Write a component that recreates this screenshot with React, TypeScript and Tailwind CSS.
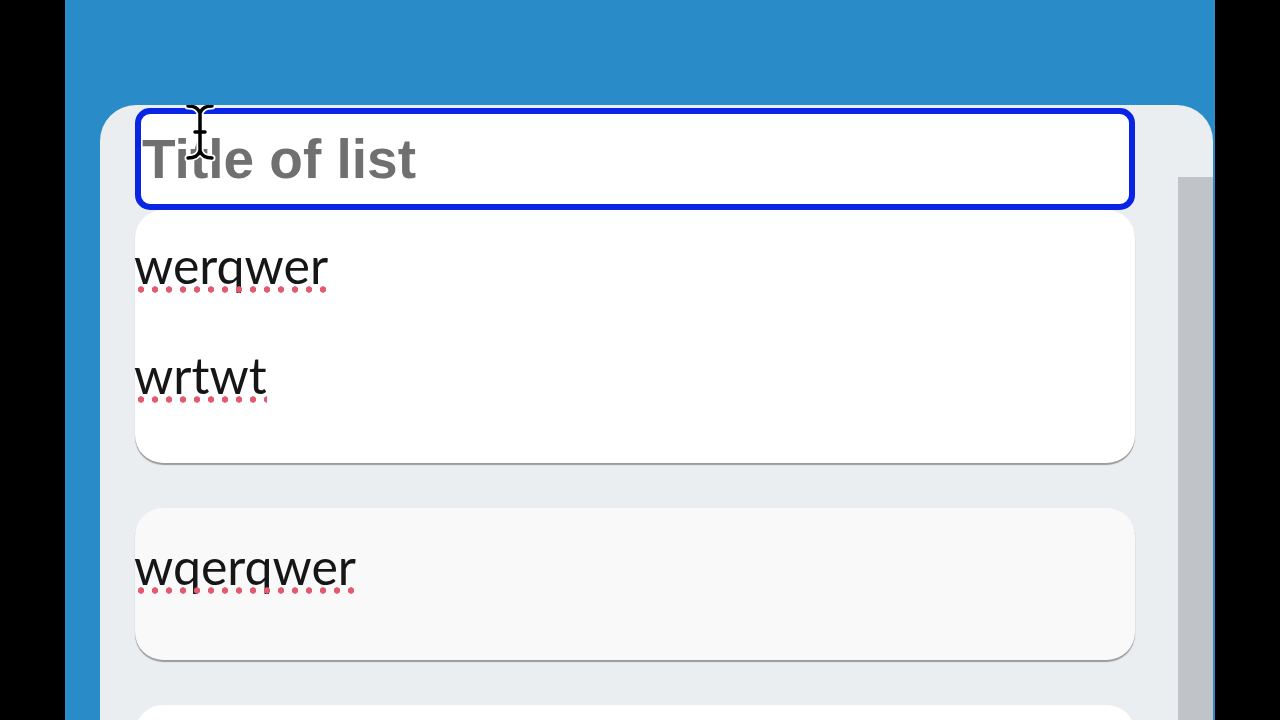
import type { ReactNode } from "react";

function Misspelled({ children }: { children: ReactNode }) {
  return (
    <span className="relative inline-block leading-[60px]">
      {children}
      <span className="absolute left-0 right-0 top-[51px] h-[7px] bg-[radial-gradient(circle,#e25a6e_2.9px,transparent_3.5px)] bg-[length:14px_7px] bg-repeat-x" />
    </span>
  );
}

function Card({ lines, dim, h }: { lines: string[]; dim?: boolean; h: string }) {
  return (
    <div
      className={
        "w-full shrink-0 rounded-[28px] shadow-[0_2px_1px_rgba(0,0,0,0.35)] font-['Lato',sans-serif] text-[50px] text-[#161616] " +
        h +
        (dim ? " bg-[#f9f9fa] pt-[28px] leading-[60px]" : " bg-white leading-[110px]")
      }
    >
      {lines.map((line) => (
        <div key={line} className="-ml-px">
          <Misspelled>{line}</Misspelled>
        </div>
      ))}
    </div>
  );
}

export default function App() {
  return (
    <div className="flex h-[720px] w-[1280px] overflow-hidden bg-black">
      <div className="w-[65px] shrink-0 bg-black" />

      <div className="flex w-[1150px] shrink-0 flex-col bg-[#298bc7] pl-[35px] pr-[2px] pt-[105px]">
        <div className="flex flex-1 overflow-hidden rounded-t-[36px] bg-[#ebeef0]">
          <div className="relative flex w-[1078px] shrink-0 flex-col pl-[35px] pr-[43px] pt-[3px]">
            <div className="relative z-10 h-[102px] shrink-0 rounded-[15px] border-[6px] border-[#0a24e6] bg-white">
              <input
                placeholder="Title of list"
                className="h-full w-full rounded-[9px] bg-transparent pl-[1px] font-['Liberation_Sans',Arial,sans-serif] text-[55px] font-bold text-[#222] outline-none placeholder:text-[#707070]"
              />
              <svg
                className="pointer-events-none absolute left-[43px] top-[-12px]"
                width="32"
                height="60"
                viewBox="0 0 32 60"
              >
                <path
                  d="M4 4 C11 4 14 6 16 11 C18 6 21 4 28 4 M16 11 V49 M4 56 C11 56 14 54 16 49 C18 54 21 56 28 56 M11 30 H21"
                  fill="none"
                  stroke="#fff"
                  strokeWidth="7"
                  strokeLinecap="round"
                />
                <path
                  d="M4 4 C11 4 14 6 16 11 C18 6 21 4 28 4 M16 11 V49 M4 56 C11 56 14 54 16 49 C18 54 21 56 28 56 M11 30 H21"
                  fill="none"
                  stroke="#000"
                  strokeWidth="3.5"
                  strokeLinecap="round"
                />
              </svg>
            </div>

            <div className="shrink-0">
              <Card lines={["werqwer", "wrtwt"]} h="h-[253px]" />
            </div>
            <div className="mt-[45px] shrink-0">
              <Card lines={["wqerqwer"]} dim h="h-[152px]" />
            </div>
            <div className="mt-[45px] shrink-0">
              <Card lines={[]} h="h-[152px]" />
            </div>
          </div>

          <div className="flex flex-1 flex-col pt-[72px]">
            <div className="flex-1 bg-[#c0c4c8]" />
          </div>
        </div>
      </div>

      <div className="flex-1 bg-black" />
    </div>
  );
}
